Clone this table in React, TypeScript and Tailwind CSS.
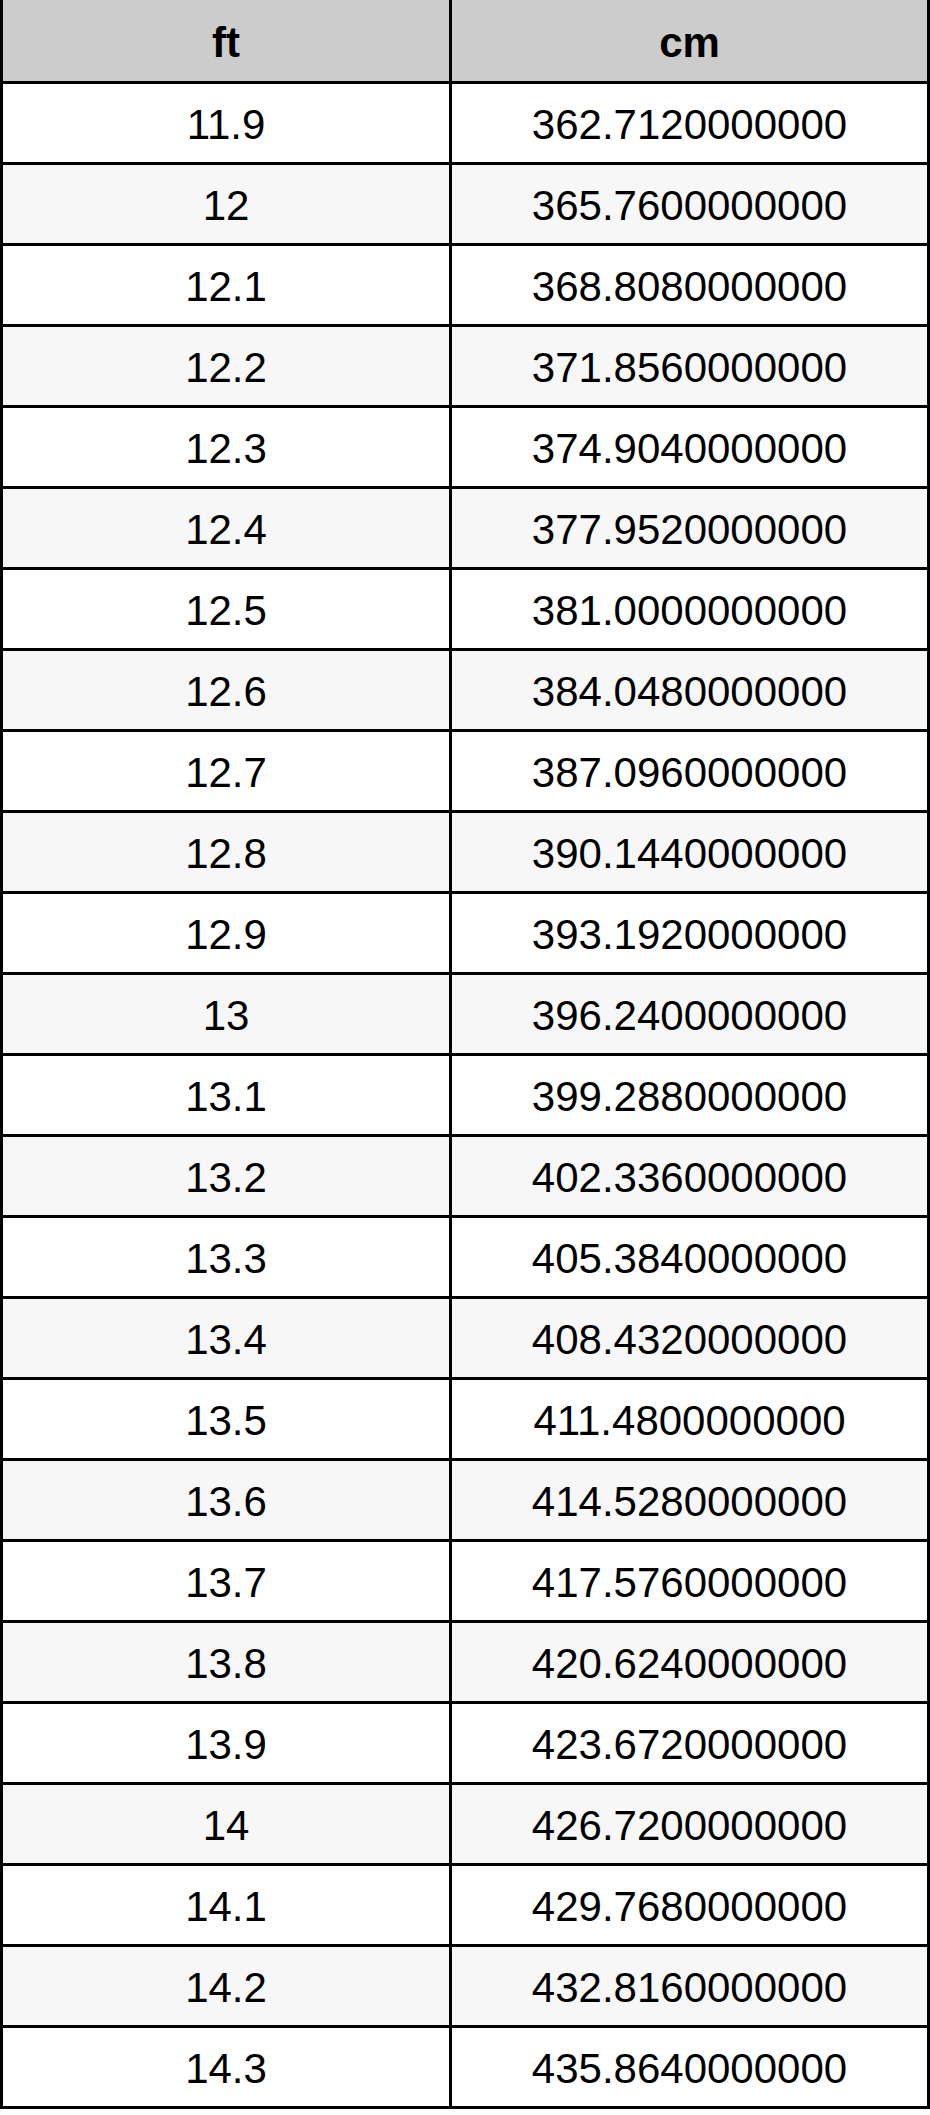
const rows: [string, string][] = [
  ["11.9", "362.7120000000"],
  ["12", "365.7600000000"],
  ["12.1", "368.8080000000"],
  ["12.2", "371.8560000000"],
  ["12.3", "374.9040000000"],
  ["12.4", "377.9520000000"],
  ["12.5", "381.0000000000"],
  ["12.6", "384.0480000000"],
  ["12.7", "387.0960000000"],
  ["12.8", "390.1440000000"],
  ["12.9", "393.1920000000"],
  ["13", "396.2400000000"],
  ["13.1", "399.2880000000"],
  ["13.2", "402.3360000000"],
  ["13.3", "405.3840000000"],
  ["13.4", "408.4320000000"],
  ["13.5", "411.4800000000"],
  ["13.6", "414.5280000000"],
  ["13.7", "417.5760000000"],
  ["13.8", "420.6240000000"],
  ["13.9", "423.6720000000"],
  ["14", "426.7200000000"],
  ["14.1", "429.7680000000"],
  ["14.2", "432.8160000000"],
  ["14.3", "435.8640000000"],
];

const App = () => {
  return (
    <div
      className="w-[930px] border-x-[3px] border-b-[3px] border-black bg-white text-black"
      style={{ fontFamily: "'Liberation Sans', Arial, sans-serif" }}
    >
      <div className="grid h-[81px] grid-cols-[446px_1fr] bg-[#cccccc] text-[42px] font-bold">
        <div className="flex items-center justify-center pt-[3px]">ft</div>
        <div className="flex items-center justify-center border-l-[3px] border-black pt-[3px]">cm</div>
      </div>
      {rows.map(([ft, cm], i) => (
        <div
          key={ft}
          className={`grid h-[81px] grid-cols-[446px_1fr] border-t-[3px] border-black text-[42px] ${
            i % 2 === 0 ? "bg-white" : "bg-[#f7f7f7]"
          }`}
        >
          <div className="flex items-center justify-center pt-[2px]">{ft}</div>
          <div className="flex items-center justify-center border-l-[3px] border-black pt-[2px]">{cm}</div>
        </div>
      ))}
    </div>
  );
};

export default App;
